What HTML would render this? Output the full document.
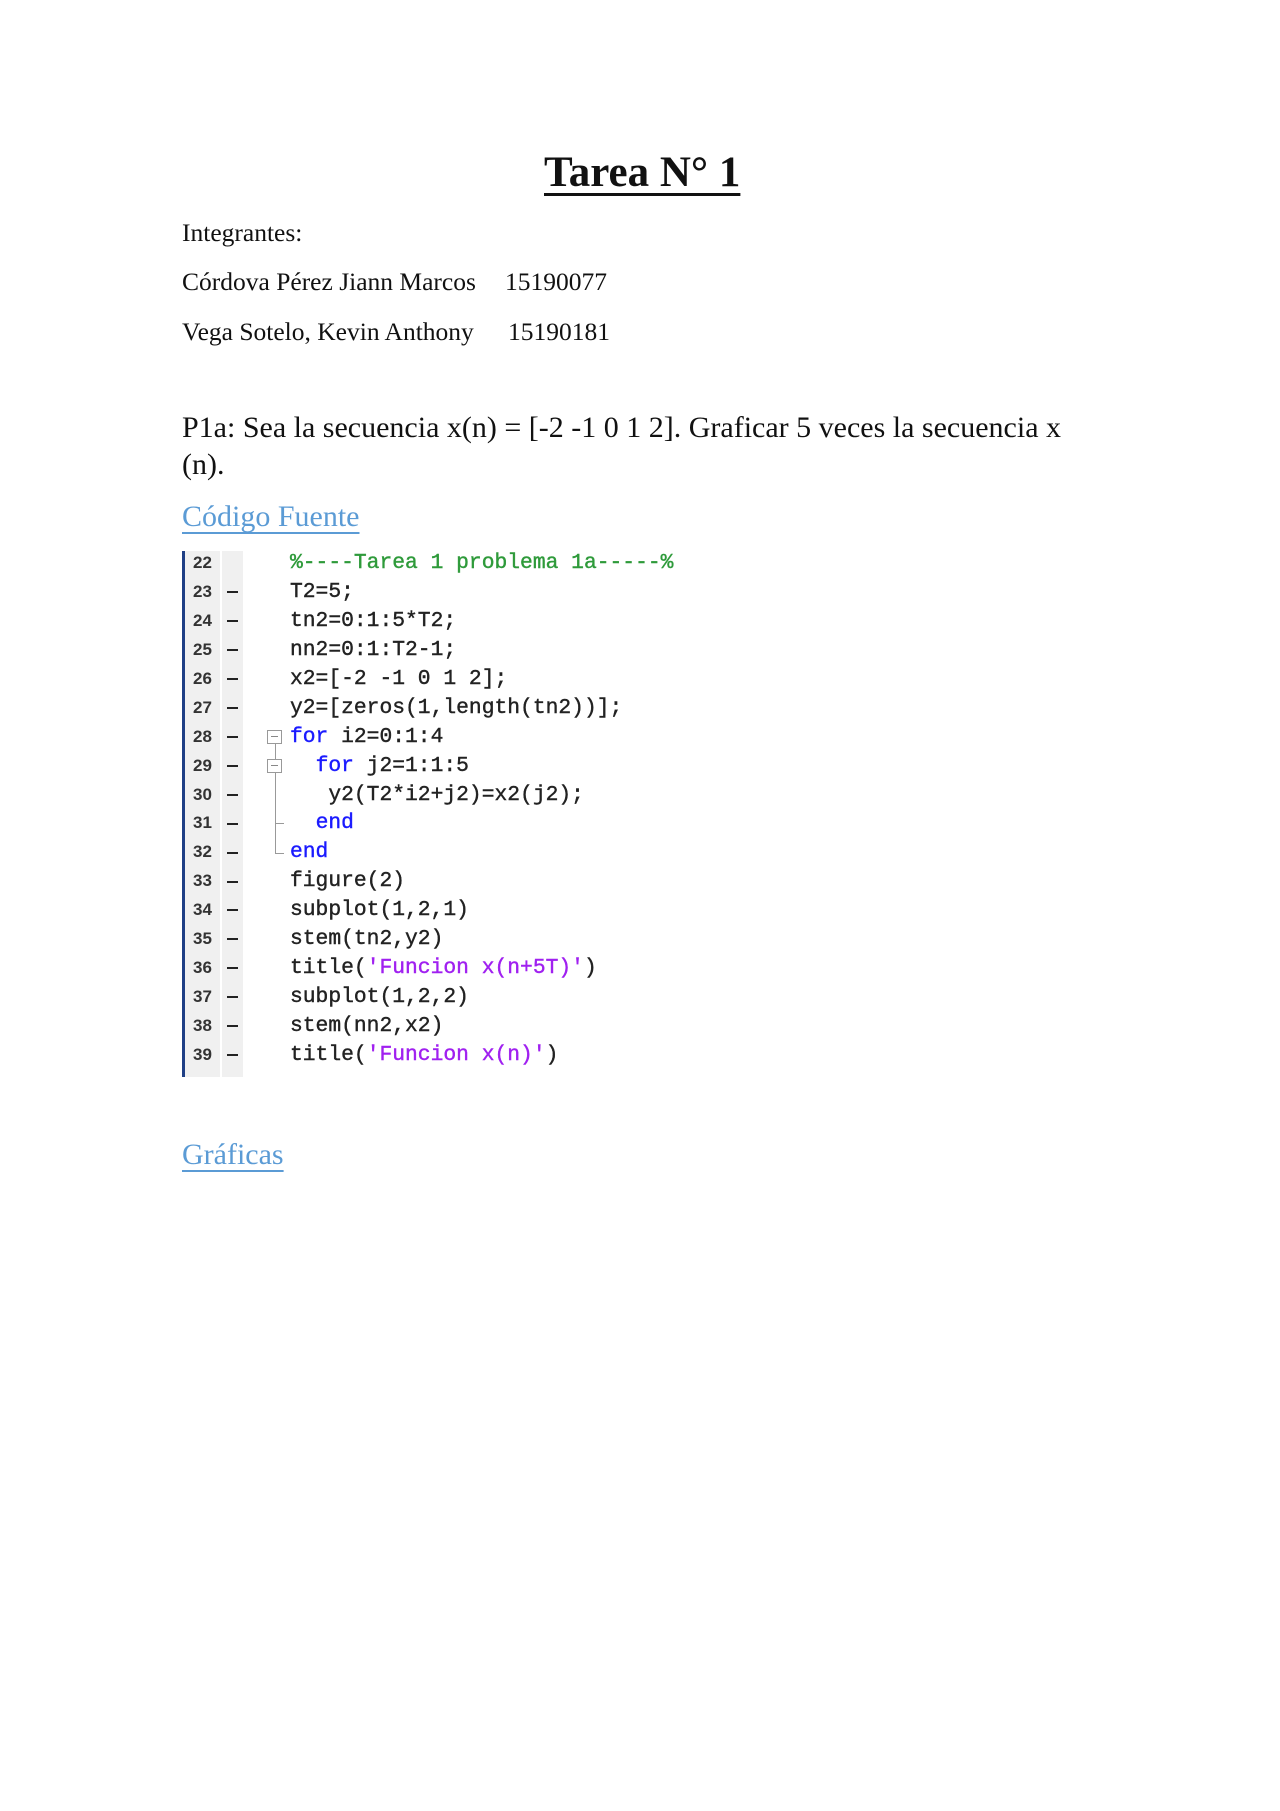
<!DOCTYPE html>
<html><head><meta charset="utf-8"><style>
body{margin:0;background:#fff;width:1280px;height:1811px;position:relative;overflow:hidden;font-family:"Liberation Serif",serif;color:#111}
.t{position:absolute;line-height:1;white-space:pre}
.lnk{color:#5b9bd5;text-decoration:underline;text-decoration-thickness:2px;text-underline-offset:6px}
.code{position:absolute;left:182px;top:551px;width:600px;height:526px}
.bar{position:absolute;left:0;top:0;width:3px;height:526px;background:#1f3f85}
.ln{position:absolute;left:3px;top:0;width:35px;height:526px;background:#f0f0f0}
.dc{position:absolute;left:40px;top:0;width:21px;height:526px;background:#f0f0f0}
.nums{position:absolute;left:11px;top:-2px;font:bold 17px/28.94px "Liberation Sans",sans-serif;color:#333;white-space:pre}
.dash{position:absolute;left:45px;width:11px;height:2px;background:#222}
pre{position:absolute;left:108px;top:-2px;margin:0;font:21.3px/28.94px "Liberation Mono",monospace;color:#222;-webkit-text-stroke:0.4px #222}
.c{color:#2e9a3a;-webkit-text-stroke:0.4px #2e9a3a}.k{color:#1a1aff;-webkit-text-stroke:0.4px #1a1aff}.s{color:#a020f0;-webkit-text-stroke:0.4px #a020f0}
.box{position:absolute;left:85px;width:13px;height:12px;border:1px solid #999;background:#fff}
.box:after{content:"";position:absolute;left:3px;top:5px;width:7px;height:1px;background:#888}
</style></head><body>
<div class="t" style="left:544px;top:151px;font-size:43px;font-weight:bold;text-decoration:underline;text-decoration-thickness:3px;text-underline-offset:7px">Tarea N° 1</div>
<div class="t" style="left:182px;top:220px;font-size:25.5px">Integrantes:</div>
<div class="t" style="left:182px;top:269px;font-size:25.5px">Córdova Pérez Jiann Marcos</div>
<div class="t" style="left:505px;top:269px;font-size:25.5px">15190077</div>
<div class="t" style="left:182px;top:319px;font-size:25.5px">Vega Sotelo, Kevin Anthony</div>
<div class="t" style="left:508px;top:319px;font-size:25.5px">15190181</div>
<div class="t" style="left:182px;top:413px;font-size:30px">P1a: Sea la secuencia x(n) = [-2 -1 0 1 2]. Graficar 5 veces la secuencia x</div>
<div class="t" style="left:182px;top:450px;font-size:30px">(n).</div>
<div class="t lnk" style="left:182px;top:502px;font-size:30px">Código Fuente</div>
<div class="code">
<div class="bar"></div><div class="ln"></div><div class="dc"></div>
<div class="nums">22
23
24
25
26
27
28
29
30
31
32
33
34
35
36
37
38
39</div>
<div class="dash" style="top:40px"></div><div class="dash" style="top:69px"></div><div class="dash" style="top:98px"></div><div class="dash" style="top:127px"></div><div class="dash" style="top:156px"></div><div class="dash" style="top:185px"></div><div class="dash" style="top:214px"></div><div class="dash" style="top:243px"></div><div class="dash" style="top:272px"></div><div class="dash" style="top:301px"></div><div class="dash" style="top:330px"></div><div class="dash" style="top:358px"></div><div class="dash" style="top:387px"></div><div class="dash" style="top:416px"></div><div class="dash" style="top:445px"></div><div class="dash" style="top:474px"></div><div class="dash" style="top:503px"></div>
<div style="position:absolute;left:93px;top:193px;width:1px;height:110px;background:#999"></div>
<div style="position:absolute;left:93px;top:272px;width:9px;height:1px;background:#999"></div>
<div style="position:absolute;left:93px;top:302px;width:9px;height:1px;background:#999"></div>
<div class="box" style="top:179px"></div><div class="box" style="top:208px"></div>
<pre><span class="c">%----Tarea 1 problema 1a-----%</span>
T2=5;
tn2=0:1:5*T2;
nn2=0:1:T2-1;
x2=[-2 -1 0 1 2];
y2=[zeros(1,length(tn2))];
<span class="k">for</span> i2=0:1:4
  <span class="k">for</span> j2=1:1:5
   y2(T2*i2+j2)=x2(j2);
  <span class="k">end</span>
<span class="k">end</span>
figure(2)
subplot(1,2,1)
stem(tn2,y2)
title(<span class="s">'Funcion x(n+5T)'</span>)
subplot(1,2,2)
stem(nn2,x2)
title(<span class="s">'Funcion x(n)'</span>)</pre>
</div>
<div class="t lnk" style="left:182px;top:1140px;font-size:30px">Gráficas</div>
</body></html>
